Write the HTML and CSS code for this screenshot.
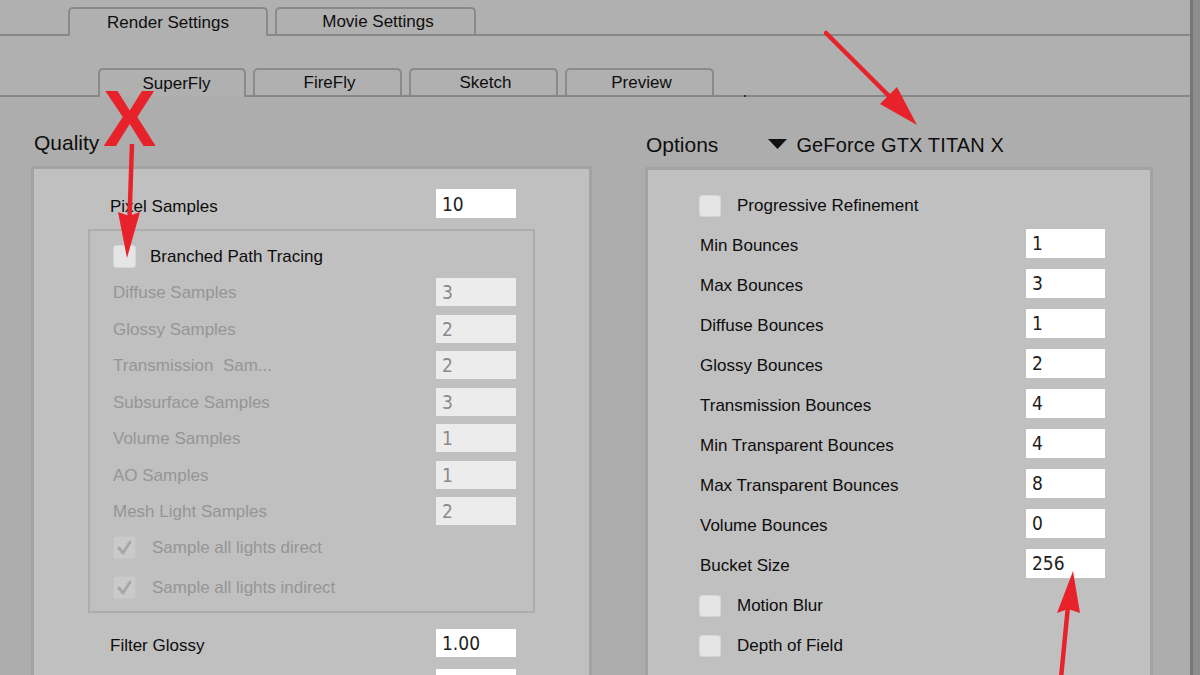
FILE: index.html
```html
<!DOCTYPE html>
<html lang="en">
<head>
<meta charset="utf-8">
<title>Render Settings</title>
<link rel="stylesheet" href="styles.css">
</head>
<body>
<div class="window">
  <div class="main">
    <div class="tabbar tabbar-top">
      <div class="tab tab-wide active">Render Settings</div>
      <div class="tab tab-wide2">Movie Settings</div>
    </div>
    <div class="tabbar tabbar-sub">
      <div class="tab tab-sub active">SuperFly</div>
      <div class="tab tab-sub2">FireFly</div>
      <div class="tab tab-sub2">Sketch</div>
      <div class="tab tab-sub2">Preview</div>
      <span class="dot"></span>
    </div>

    <div class="content">
      <section class="col col-left">
        <h2 class="title">Quality</h2>
        <div class="panel panel-left">
          <div class="row row-plain">
            <span class="label">Pixel Samples</span>
            <span class="field">10</span>
          </div>
          <div class="group">
            <div class="cbrow">
              <span class="cb"></span>
              <span class="label">Branched Path Tracing</span>
            </div>
            <div class="row row-dis first">
              <span class="label dis">Diffuse Samples</span>
              <span class="field dis">3</span>
            </div>
            <div class="row row-dis">
              <span class="label dis">Glossy Samples</span>
              <span class="field dis">2</span>
            </div>
            <div class="row row-dis">
              <span class="label dis">Transmission&nbsp; Sam...</span>
              <span class="field dis">2</span>
            </div>
            <div class="row row-dis">
              <span class="label dis">Subsurface Samples</span>
              <span class="field dis">3</span>
            </div>
            <div class="row row-dis">
              <span class="label dis">Volume Samples</span>
              <span class="field dis">1</span>
            </div>
            <div class="row row-dis">
              <span class="label dis">AO Samples</span>
              <span class="field dis">1</span>
            </div>
            <div class="row row-dis">
              <span class="label dis">Mesh Light Samples</span>
              <span class="field dis">2</span>
            </div>
            <div class="cbrow cbrow-dis first">
              <span class="cb cb-dis"><svg viewBox="0 0 23 23" width="23" height="23"><polyline points="6,12 10,17 17,6" fill="none" stroke="#a7a7a7" stroke-width="3" stroke-linecap="round" stroke-linejoin="round"/></svg></span>
              <span class="label dis">Sample all lights direct</span>
            </div>
            <div class="cbrow cbrow-dis second">
              <span class="cb cb-dis"><svg viewBox="0 0 23 23" width="23" height="23"><polyline points="6,12 10,17 17,6" fill="none" stroke="#a7a7a7" stroke-width="3" stroke-linecap="round" stroke-linejoin="round"/></svg></span>
              <span class="label dis">Sample all lights indirect</span>
            </div>
          </div>
          <div class="row row-plain row-after">
            <span class="label">Filter Glossy</span>
            <span class="field">1.00</span>
          </div>
          <div class="row row-plain row-next">
            <span class="label"></span>
            <span class="field"></span>
          </div>
        </div>
      </section>

      <section class="col col-right">
        <div class="title-row">
          <h2 class="title title-inline">Options</h2>
          <div class="device">
            <svg class="tri" viewBox="0 0 19 10" width="19" height="10"><polygon points="0,0 19,0 9.5,10" fill="#111"/></svg>
            <span>GeForce GTX TITAN X</span>
          </div>
        </div>
        <div class="panel panel-right">
          <div class="cbrow cbrow-r"><span class="cb cb-r"></span><span class="label">Progressive Refinement</span></div>
          <div class="row"><span class="label lbl-r">Min Bounces</span><span class="field field-r">1</span></div>
          <div class="row"><span class="label lbl-r">Max Bounces</span><span class="field field-r">3</span></div>
          <div class="row"><span class="label lbl-r">Diffuse Bounces</span><span class="field field-r">1</span></div>
          <div class="row"><span class="label lbl-r">Glossy Bounces</span><span class="field field-r">2</span></div>
          <div class="row"><span class="label lbl-r">Transmission Bounces</span><span class="field field-r">4</span></div>
          <div class="row"><span class="label lbl-r">Min Transparent Bounces</span><span class="field field-r">4</span></div>
          <div class="row"><span class="label lbl-r">Max Transparent Bounces</span><span class="field field-r">8</span></div>
          <div class="row"><span class="label lbl-r">Volume Bounces</span><span class="field field-r">0</span></div>
          <div class="row"><span class="label lbl-r">Bucket Size</span><span class="field field-r">256</span></div>
          <div class="cbrow cbrow-r"><span class="cb cb-r"></span><span class="label">Motion Blur</span></div>
          <div class="cbrow cbrow-r"><span class="cb cb-r"></span><span class="label">Depth of Field</span></div>
          <div class="cbrow cbrow-r"><span class="cb cb-r"></span></div>
        </div>
      </section>
    </div>
  </div>
  <div class="strip"></div>

  <svg class="annot" viewBox="0 0 1200 675" width="1200" height="675">
    <g fill="#e8222a" stroke="none">
      <line x1="826" y1="33" x2="893" y2="100" stroke="#e8222a" stroke-width="4.5" stroke-linecap="round"/>
      <polygon points="917,125 880,104 897,87"/>
      <line x1="1061" y1="678" x2="1068" y2="606" stroke="#e8222a" stroke-width="4.5"/>
      <polygon points="1073,571 1057,613 1068,609 1080,613"/>
      <line x1="132" y1="144" x2="129.5" y2="218" stroke="#e8222a" stroke-width="4.5"/>
      <polygon points="127,258 118,212 129,216 140,212"/>
      <text x="103" y="146" class="xmark">X</text>
    </g>
  </svg>
</div>
</body>
</html>
```

FILE: styles.css
```css
* {
  box-sizing: border-box;
}

html,
body {
  margin: 0;
  padding: 0;
}

body {
  width: 1200px;
  height: 675px;
  overflow: hidden;
  background: #adadad;
  font-family: "Liberation Sans", Arial, sans-serif;
  color: #111;
}

.window {
  position: relative;
  display: flex;
  width: 1200px;
  height: 675px;
  overflow: hidden;
}

.main {
  width: 1190px;
  flex: none;
  background: #adadad;
}

.strip {
  flex: 1;
  background: #8e8e8e;
  border-left: 3px solid #777777;
}

/* tab bars */
.tabbar {
  display: flex;
  align-items: flex-end;
  gap: 7px;
  border-bottom: 2px solid #878787;
  background: #b0b0b0;
}

.tabbar-top {
  height: 36px;
  padding-left: 68px;
}

.tabbar-sub {
  height: 61px;
  padding-left: 98px;
}

.tab {
  height: 27px;
  border: 2px solid #8a8a8a;
  border-bottom: none;
  border-radius: 5px 5px 0 0;
  display: flex;
  align-items: center;
  justify-content: center;
  font-size: 17px;
  color: #0e0e0e;
  background: #b0b0b0;
  padding-top: 1px;
}

.tab.active {
  height: 29px;
  margin-bottom: -2px;
}

.tab-wide {
  width: 200px;
}

.tab-wide2 {
  width: 201px;
  padding-left: 5px;
}

.tab-sub {
  width: 148px;
  padding-left: 9px;
}

.tab-sub2 {
  width: 149px;
  padding-left: 4px;
}

.dot {
  width: 2px;
  height: 2px;
  background: #333;
  margin-left: 23px;
  margin-bottom: -2px;
  align-self: flex-end;
}

/* content */
.content {
  display: flex;
  gap: 53px;
  padding-left: 31px;
}

.col-left {
  width: 561px;
}

.col-right {
  width: 508px;
}

.title {
  margin: 34px 0 11px 3px;
  height: 24px;
  font-size: 21px;
  line-height: 24px;
  font-weight: normal;
  color: #0e0e0e;
}

.title-row {
  display: flex;
  align-items: center;
  height: 24px;
  margin: 36px 0 10px 1px;
}

.title-inline {
  margin: 0;
}

.device {
  display: flex;
  align-items: center;
  gap: 9px;
  margin-left: 50px;
  font-size: 20px;
  letter-spacing: 0.15px;
  color: #0e0e0e;
}

.tri {
  display: block;
  margin-top: -2px;
}

.panel {
  background: #c1c0c0;
  border: 3px solid #a3a3a3;
  height: 580px;
}

.panel-left {
  padding: 20px 54px 0;
}

.row {
  display: flex;
  align-items: center;
  justify-content: space-between;
}

.row .label {
  padding-top: 6px;
}

.row-dis .label {
  padding-top: 2px;
}

.row-plain {
  height: 29px;
  padding: 0 19px 0 22px;
}

.row-after {
  margin-top: 16px;
  height: 28px;
}

.row-next {
  margin-top: 12px;
}

.label {
  font-size: 17px;
  color: #0d0d0d;
  white-space: nowrap;
}

.label.dis {
  color: #959595;
}

.field {
  width: 80px;
  height: 29px;
  background: #ffffff;
  display: flex;
  align-items: center;
  padding-left: 6px;
  font-family: "DejaVu Sans Condensed", "DejaVu Sans", sans-serif;
  font-stretch: condensed;
  font-size: 19px;
  color: #1e1e1e;
}

.row-after .field {
  height: 28px;
}

.field.dis {
  height: 28px;
  background: #ececec;
  color: #8a8a8a;
}

.group {
  margin-top: 11px;
  border: 2px solid #adadad;
  padding: 14px 17px 12px 23px;
}

.cbrow {
  display: flex;
  align-items: center;
  gap: 14px;
  height: 23px;
}

.cb {
  width: 23px;
  height: 23px;
  flex: none;
  background: #e5e5e5;
  border: 1px solid #d6d6d6;
  border-radius: 3px;
}

.cb svg {
  display: block;
  margin: -1px;
}

.cb-dis {
  background: #cacaca;
  border-color: #c4c4c4;
}

.cbrow-dis {
  gap: 16px;
}

.row-dis {
  height: 28px;
  margin-top: 8.5px;
}

.row-dis.first {
  margin-top: 10px;
}

.cbrow-dis.first {
  margin-top: 11px;
}

.cbrow-dis.second {
  margin-top: 17px;
}

/* right panel */
.panel-right {
  padding: 13px 45px 0 51px;
  display: grid;
  grid-auto-rows: 40px;
  align-items: center;
}

.lbl-r {
  padding-left: 1px;
}

.field-r {
  width: 79px;
}

.cbrow-r {
  gap: 16px;
  height: 22px;
  margin-top: 5px;
}

.cb-r {
  width: 22px;
  height: 22px;
}

/* annotations */
.annot {
  position: absolute;
  left: 0;
  top: 0;
  pointer-events: none;
}

.xmark {
  font-family: "Liberation Sans", Arial, sans-serif;
  font-weight: 700;
  font-size: 80px;
  fill: #e8222a;
}
```
